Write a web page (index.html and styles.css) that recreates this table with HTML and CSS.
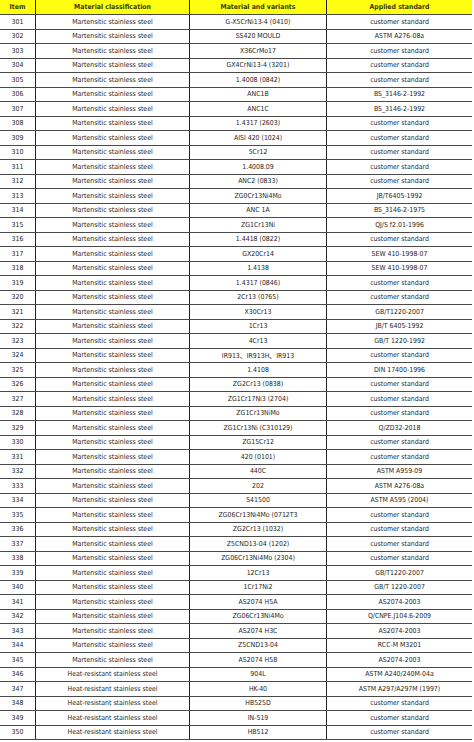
FILE: index.html
```html
<!DOCTYPE html>
<html>
<head>
<meta charset="utf-8">
<link rel="stylesheet" href="styles.css">
</head>
<body>
<div class="table" id="t">
  <div class="row head">
    <div class="c c1">Item</div>
    <div class="c c2">Material classification</div>
    <div class="c c3">Material and variants</div>
    <div class="c c4">Applied standard</div>
  </div>
</div>
<script>
var M="Martensitic stainless steel",H="Heat-resistant stainless steel",C="customer standard";
var d=[
["G-X5CrNi13-4 (0410)",C],["SS420 MOULD","ASTM A276-08a"],["X36CrMo17",C],["GX4CrNi13-4 (3201)",C],
["1.4008 (0842)",C],["ANC1B","BS_3146-2-1992"],["ANC1C","BS_3146-2-1992"],["1.4317 (2603)",C],
["AISI 420 (1024)",C],["5Cr12",C],["1.4008.09",C],["ANC2 (0833)",C],["ZG0Cr13Ni4Mo","JB/T6405-1992"],
["ANC 1A","BS_3146-2-1975"],["ZG1Cr13Ni","QJ/S f2.01-1996"],["1.4418 (0822)",C],["GX20Cr14","SEW 410-1998-07"],
["1.4138","SEW 410-1998-07"],["1.4317 (0846)",C],["2Cr13 (0765)",C],["X30Cr13","GB/T1220-2007"],
["1Cr13","JB/T 6405-1992"],["4Cr13","GB/T 1220-1992"],["IR913、IR913H、IR913",C],["1.4108","DIN 17400-1996"],
["ZG2Cr13 (0838)",C],["ZG1Cr17Ni3 (2704)",C],["ZG1Cr13NiMo",C],["ZG1Cr13Ni (C310129)","Q/ZD32-2018"],
["ZG15Cr12",C],["420 (0101)",C],["440C","ASTM A959-09"],["202","ASTM A276-08a"],["S41500","ASTM A595 (2004)"],
["ZG06Cr13Ni4Mo (0712T3",C],["ZG2Cr13 (1032)",C],["Z5CND13-04 (1202)",C],["ZG06Cr13Ni4Mo (2304)",C],
["12Cr13","GB/T1220-2007"],["1Cr17Ni2","GB/T 1220-2007"],["AS2074 H5A","AS2074-2003"],
["ZG06Cr13Ni4Mo","Q/CNPE.J104.6-2009"],["AS2074 H3C","AS2074-2003"],["Z5CND13-04","RCC-M M3201"],
["AS2074 H5B","AS2074-2003"],["904L","ASTM A240/240M-04a"],["HK-40","ASTM A297/A297M (1997)"],
["HB525D",C],["IN-519",C],["HB512",C]];
var t=document.getElementById("t");
d.forEach(function(r,i){
  var n=301+i;
  var row=document.createElement("div");row.className="row";
  [String(n),n>=346?H:M,r[0],r[1]].forEach(function(v,j){
    var c=document.createElement("div");c.className="c c"+(j+1);c.textContent=v;row.appendChild(c);
  });
  t.appendChild(row);
});
</script>
</body>
</html>
```
FILE: styles.css
```css
html, body {
  margin: 0;
  padding: 0;
  background: #ffffff;
}
.table {
  width: 472px;
  font-family: "DejaVu Sans Condensed", "DejaVu Sans", "Noto Sans CJK SC", sans-serif;
  font-stretch: condensed;
  font-size: 6.9px;
  color: #1e1e1e;
}
.row {
  display: flex;
  height: 14.5px;
  box-sizing: border-box;
  border-bottom: 1px solid #4a4a4a;
}
.row.head {
  height: 15px;
  background: #ffff10;
  color: #3a3a00;
  font-weight: bold;
}
.c {
  display: flex;
  align-items: center;
  justify-content: center;
  white-space: nowrap;
  overflow: hidden;
  box-sizing: border-box;
}
.c1 { width: 36px; border-right: 1px solid #222; }
.c2 { width: 154px; border-right: 1px solid #222; }
.c3 { width: 137px; border-right: 1px solid #222; }
.c4 { width: 145px; }
```
